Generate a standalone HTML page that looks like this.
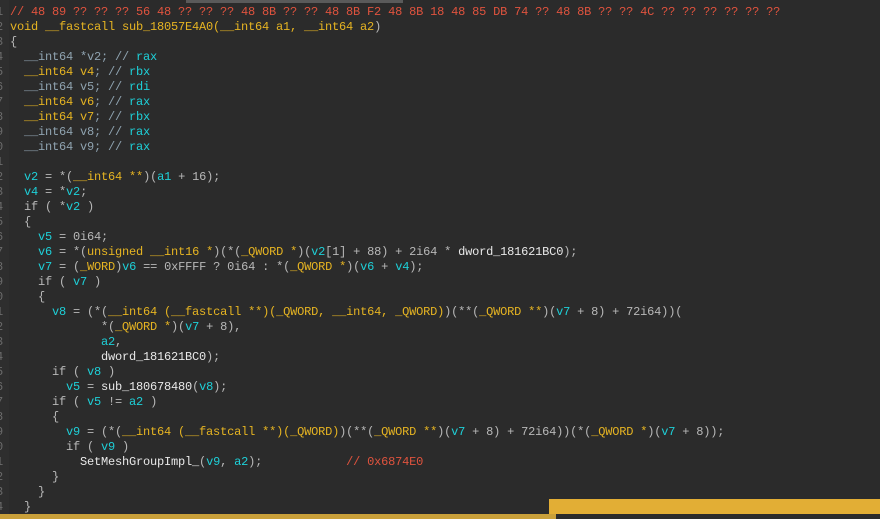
<!DOCTYPE html>
<html><head><meta charset="utf-8"><style>
html,body{margin:0;padding:0;background:#2b2b2b;width:880px;height:519px;overflow:hidden}
.g{position:absolute;left:0;top:0;width:9px;height:519px;background:#2e2e2e;overflow:hidden}
.g pre{margin:0;position:absolute;left:-4px;top:5px;color:#6b6b6b}
pre{font-family:"Liberation Mono",monospace;font-size:12px;letter-spacing:-0.2px;line-height:15px}
.c{margin:0;position:absolute;left:10px;top:5px;color:#b8b8b8;white-space:pre}
.k{color:#e6b422}.v{color:#1ed0d8}.r{color:#e0533e}.t{color:#8fa3b0}.w{color:#e8e8e8}
.bar1{position:absolute;left:186px;top:0;width:217px;height:3px;background:#5a5a5a}
.y1{position:absolute;left:549px;top:499px;width:331px;height:15px;background:#e2ae35}
.y2{position:absolute;left:0;top:514px;width:556px;height:5px;background:#c9a03a}
</style></head><body>
<div class="bar1"></div>
<div class="g"><pre>1
2
3
4
5
6
7
8
9
0
1
2
3
4
5
6
7
8
9
0
1
2
3
4
5
6
7
8
9
0
1
2
3
4</pre></div>
<pre class="c"><span class="r">// 48 89 ?? ?? ?? 56 48 ?? ?? ?? 48 8B ?? ?? 48 8B F2 48 8B 18 48 85 DB 74 ?? 48 8B ?? ?? 4C ?? ?? ?? ?? ?? ??</span>
<span class="k">void __fastcall sub_18057E4A0(__int64 a1, __int64 a2</span>)
{
  <span class="t">__int64 *v2; // </span><span class="v">rax</span>
  <span class="k">__int64 v4</span><span class="t">; // </span><span class="v">rbx</span>
  <span class="t">__int64 v5; // </span><span class="v">rdi</span>
  <span class="k">__int64 v6</span><span class="t">; // </span><span class="v">rax</span>
  <span class="k">__int64 v7</span><span class="t">; // </span><span class="v">rbx</span>
  <span class="t">__int64 v8; // </span><span class="v">rax</span>
  <span class="t">__int64 v9; // </span><span class="v">rax</span>

  <span class="v">v2</span> = *(<span class="k">__int64 **</span>)(<span class="v">a1</span> + 16);
  <span class="v">v4</span> = *<span class="v">v2</span>;
  if ( *<span class="v">v2</span> )
  {
    <span class="v">v5</span> = 0i64;
    <span class="v">v6</span> = *(<span class="k">unsigned __int16 *</span>)(*(<span class="k">_QWORD *</span>)(<span class="v">v2</span>[1] + 88) + 2i64 * <span class="w">dword_181621BC0</span>);
    <span class="v">v7</span> = (<span class="k">_WORD</span>)<span class="v">v6</span> == 0xFFFF ? 0i64 : *(<span class="k">_QWORD *</span>)(<span class="v">v6</span> + <span class="v">v4</span>);
    if ( <span class="v">v7</span> )
    {
      <span class="v">v8</span> = (*(<span class="k">__int64 (__fastcall **)(_QWORD, __int64, _QWORD)</span>)(**(<span class="k">_QWORD **</span>)(<span class="v">v7</span> + 8) + 72i64))(
             *(<span class="k">_QWORD *</span>)(<span class="v">v7</span> + 8),
             <span class="v">a2</span>,
             <span class="w">dword_181621BC0</span>);
      if ( <span class="v">v8</span> )
        <span class="v">v5</span> = <span class="w">sub_180678480</span>(<span class="v">v8</span>);
      if ( <span class="v">v5</span> != <span class="v">a2</span> )
      {
        <span class="v">v9</span> = (*(<span class="k">__int64 (__fastcall **)(_QWORD)</span>)(**(<span class="k">_QWORD **</span>)(<span class="v">v7</span> + 8) + 72i64))(*(<span class="k">_QWORD *</span>)(<span class="v">v7</span> + 8));
        if ( <span class="v">v9</span> )
          <span class="w">SetMeshGroupImpl_</span>(<span class="v">v9</span>, <span class="v">a2</span>);            <span class="r">// 0x6874E0</span>
      }
    }
  }</pre>
<div class="y1"></div>
<div class="y2"></div>
</body></html>
